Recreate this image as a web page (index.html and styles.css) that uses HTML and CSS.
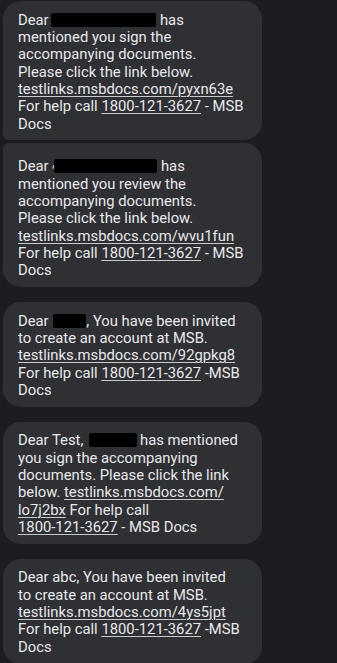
FILE: index.html
```html
<!DOCTYPE html>
<html lang="en">
<head>
<meta charset="utf-8">
<title>Messages</title>
<link rel="stylesheet" href="styles.css">
</head>
<body>
<main class="thread">
  <div class="group">
    <div class="bubble bubble--first">
      Dear <span class="redact redact--long"></span> has<br>
      mentioned you sign the<br>
      accompanying documents.<br>
      Please click the link below.<br>
      <a class="link" href="#">testlinks.msbdocs.com/pyxn63e</a><br>
      For help call <a class="link" href="#">1800-121-3627</a> - MSB<br>
      Docs
    </div>
    <div class="bubble bubble--last">
      Dear <span class="comma">,</span><span class="redact redact--long2"></span> has<br>
      mentioned you review the<br>
      accompanying documents.<br>
      Please click the link below.<br>
      <a class="link" href="#">testlinks.msbdocs.com/wvu1fun</a><br>
      For help call <a class="link" href="#">1800-121-3627</a> - MSB<br>
      Docs
    </div>
  </div>
  <div class="group">
    <div class="bubble">
      Dear <span class="redact redact--short"></span>, You have been invited<br>
      to create an account at MSB.<br>
      <a class="link" href="#">testlinks.msbdocs.com/92gpkg8</a><br>
      For help call <a class="link" href="#">1800-121-3627</a> -MSB<br>
      Docs
    </div>
  </div>
  <div class="group">
    <div class="bubble">
      Dear Test, <span class="redact redact--mid"></span>has mentioned<br>
      you sign the accompanying<br>
      documents. Please click the link<br>
      below. <a class="link" href="#">testlinks.msbdocs.com/</a><br>
      <a class="link" href="#">lo7j2bx</a> For help call<br>
      <a class="link" href="#">1800-121-3627</a> - MSB Docs
    </div>
  </div>
  <div class="group">
    <div class="bubble">
      Dear abc, You have been invited<br>
      to create an account at MSB.<br>
      <a class="link" href="#">testlinks.msbdocs.com/4ys5jpt</a><br>
      For help call <a class="link" href="#">1800-121-3627</a> -MSB<br>
      Docs
    </div>
  </div>
</main>
</body>
</html>
```

FILE: styles.css
```css
html, body {
  margin: 0;
  padding: 0;
  background: #1c1d21;
}

body {
  font-family: Roboto, "Noto Sans", "Liberation Sans", sans-serif;
  font-size: 14.8px;
  color: #e8e8ea;
  width: 337px;
  height: 663px;
  overflow: hidden;
}

.thread {
  display: flex;
  flex-direction: column;
  gap: 15px;
  padding: 1px 0 0 3px;
}

.group {
  display: flex;
  flex-direction: column;
  gap: 3px;
}

.bubble {
  box-sizing: border-box;
  width: 259px;
  background: #2f3034;
  border-radius: 18px;
  padding: 10.5px 8px 7.5px 15px;
  line-height: 17.35px;
  white-space: nowrap;
}

.bubble--first {
  border-bottom-left-radius: 6px;
}

.bubble--last {
  border-top-left-radius: 6px;
}

.link {
  color: inherit;
  text-decoration: underline;
  text-decoration-thickness: 1px;
  text-underline-offset: 2px;
  text-decoration-color: #c9c9cc;
}

.redact {
  display: inline-block;
  background: #000;
  height: 14px;
  vertical-align: -2px;
  border-radius: 2px;
}

.redact--long {
  width: 105px;
  margin-left: -1px;
}

.redact--long2 {
  width: 103px;
  margin-left: -1px;
}

.redact--short {
  width: 33px;
  margin-left: 1px;
  margin-right: 0;
}

.redact--mid {
  width: 48px;
  margin-left: 2px;
  margin-right: 3px;
}

.comma {
  display: inline-block;
  width: 3px;
  overflow: hidden;
}
```
